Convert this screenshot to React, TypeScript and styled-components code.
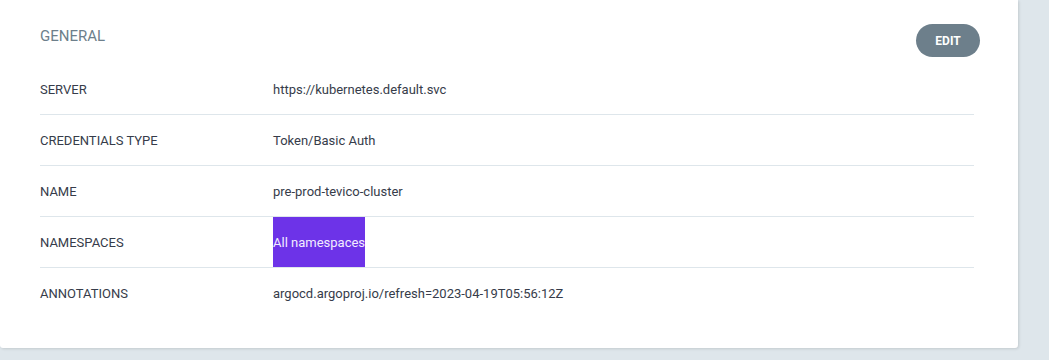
import React from "react";
import styled, { createGlobalStyle } from "styled-components";

const GlobalStyle = createGlobalStyle`
  html, body {
    margin: 0;
    padding: 0;
    background: #dee6eb;
    font-family: Roboto, "Liberation Sans", sans-serif;
  }
`;

const rows = [
  { label: "SERVER", value: "https://kubernetes.default.svc" },
  { label: "CREDENTIALS TYPE", value: "Token/Basic Auth" },
  { label: "NAME", value: "pre-prod-tevico-cluster" },
  { label: "NAMESPACES", value: "All namespaces", highlight: true },
  { label: "ANNOTATIONS", value: "argocd.argoproj.io/refresh=2023-04-19T05:56:12Z" },
];

function App() {
  return (
    <>
      <GlobalStyle />
      <Page>
        <Card>
          <Header>
            <Title>GENERAL</Title>
            <EditButton>EDIT</EditButton>
          </Header>
          <Rows>
            {rows.map((r) => (
              <Row key={r.label}>
                <Label>{r.label}</Label>
                <Value $highlight={r.highlight}>{r.value}</Value>
              </Row>
            ))}
          </Rows>
        </Card>
      </Page>
    </>
  );
}

const Page = styled.div`
  width: 1049px;
  height: 360px;
  overflow: hidden;
`;

const Card = styled.section`
  width: 1018px;
  box-sizing: border-box;
  background: #fff;
  padding: 24px 38px 30px 40px;
  border-radius: 0 0 3px 3px;
  box-shadow: 1px 1px 3px rgba(0, 0, 0, 0.12);
`;

const Header = styled.header`
  display: flex;
  justify-content: space-between;
  align-items: flex-start;
  height: 40px;
`;

const Title = styled.h2`
  margin: 3px 0 0;
  font-size: 15px;
  font-weight: 400;
  line-height: 18px;
  color: #6d7f8b;
`;

const EditButton = styled.button`
  width: 64px;
  height: 33px;
  border: none;
  border-radius: 17px;
  background: #6d7f8b;
  color: #fff;
  font-family: inherit;
  font-size: 12px;
  font-weight: 700;
  cursor: pointer;
`;

const Rows = styled.div`
  margin-right: 6px;
`;

const Row = styled.div`
  display: flex;
  height: 51px;
  box-sizing: border-box;
  border-bottom: 1px solid #dee6eb;
  font-size: 13px;
  color: #363c4a;

  &:last-child {
    border-bottom: none;
    height: 50px;
  }
`;

const Label = styled.div`
  width: 233px;
  display: flex;
  align-items: center;
`;

const Value = styled.div<{ $highlight?: boolean }>`
  display: flex;
  align-items: center;
  background: ${(p) => (p.$highlight ? "#6d33e8" : "transparent")};
  color: ${(p) => (p.$highlight ? "#f2ecff" : "inherit")};
`;

export default App;
